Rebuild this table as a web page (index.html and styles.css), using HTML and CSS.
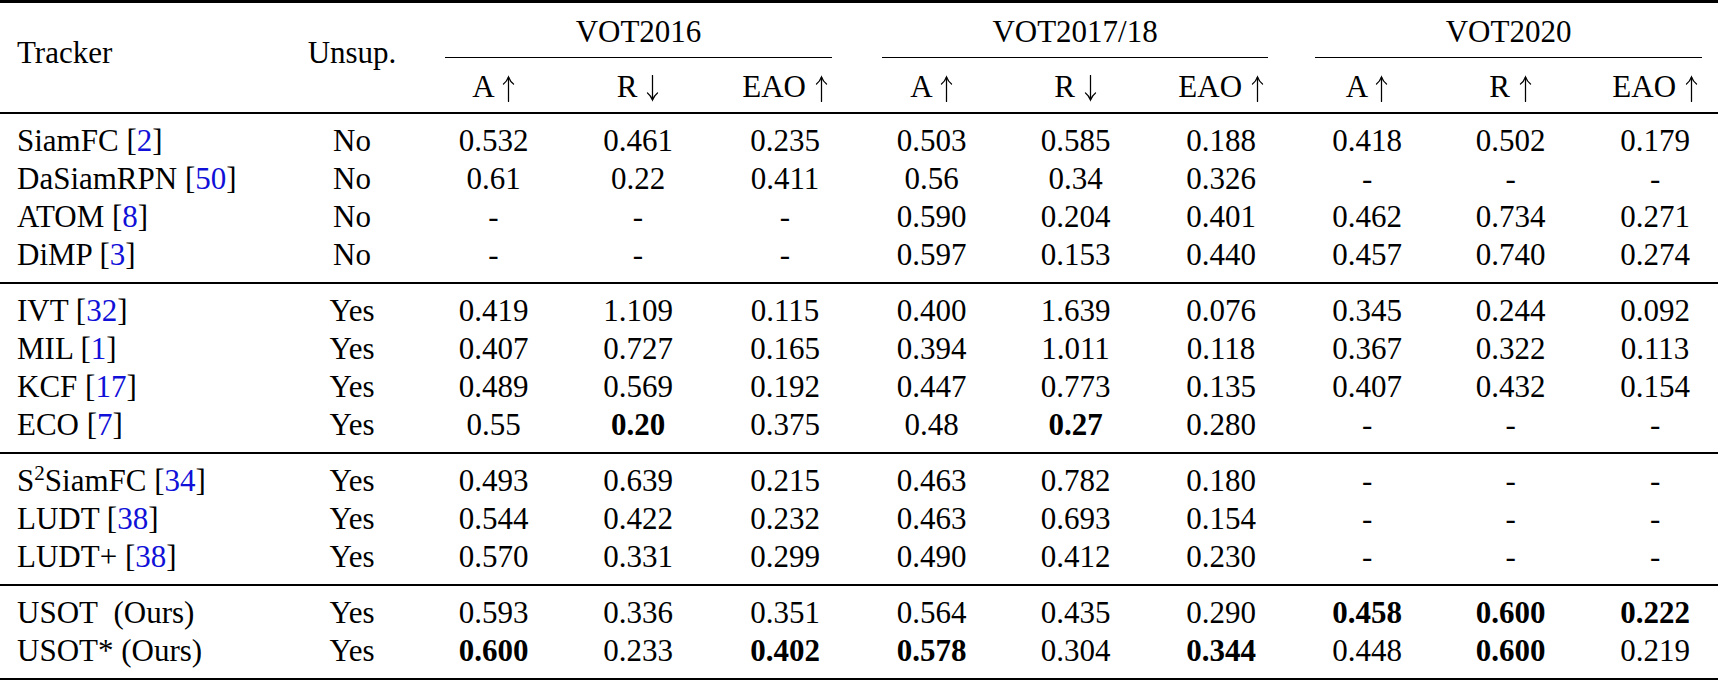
FILE: index.html
```html
<!DOCTYPE html>
<html lang="en">
<head>
<meta charset="utf-8">
<title>Tracker comparison</title>
<link rel="stylesheet" href="styles.css">
</head>
<body>
<table class="results">
  <colgroup>
    <col class="c-name"><col class="c-uns">
    <col class="c-a1"><col class="c-r1"><col class="c-e1">
    <col class="c-a2"><col class="c-r2"><col class="c-e2">
    <col class="c-a3"><col class="c-r3"><col class="c-e3">
  </colgroup>
  <thead>
    <tr class="hrow1">
      <th rowspan="2" class="name head-multi">Tracker</th>
      <th rowspan="2" class="head-multi">Unsup.</th>
      <th colspan="3" class="grp"><div class="grp-lbl">VOT2016</div></th>
      <th colspan="3" class="grp"><div class="grp-lbl">VOT2017/18</div></th>
      <th colspan="3" class="grp"><div class="grp-lbl last">VOT2020</div></th>
    </tr>
    <tr class="hrow2">
      <th>A <svg class="arr" viewBox="0 0 14 28" role="img" aria-label="↑"><path d="M7 2.2V28"/><path d="M1.6 9.2Q5.2 6.4 7 1.6Q8.8 6.4 12.4 9.2"/></svg></th>
      <th>R <svg class="arr dn" viewBox="0 0 14 28" role="img" aria-label="↓"><path d="M7 2.2V28"/><path d="M1.6 9.2Q5.2 6.4 7 1.6Q8.8 6.4 12.4 9.2"/></svg></th>
      <th>EAO <svg class="arr" viewBox="0 0 14 28" role="img" aria-label="↑"><path d="M7 2.2V28"/><path d="M1.6 9.2Q5.2 6.4 7 1.6Q8.8 6.4 12.4 9.2"/></svg></th>
      <th>A <svg class="arr" viewBox="0 0 14 28" role="img" aria-label="↑"><path d="M7 2.2V28"/><path d="M1.6 9.2Q5.2 6.4 7 1.6Q8.8 6.4 12.4 9.2"/></svg></th>
      <th>R <svg class="arr dn" viewBox="0 0 14 28" role="img" aria-label="↓"><path d="M7 2.2V28"/><path d="M1.6 9.2Q5.2 6.4 7 1.6Q8.8 6.4 12.4 9.2"/></svg></th>
      <th>EAO <svg class="arr" viewBox="0 0 14 28" role="img" aria-label="↑"><path d="M7 2.2V28"/><path d="M1.6 9.2Q5.2 6.4 7 1.6Q8.8 6.4 12.4 9.2"/></svg></th>
      <th>A <svg class="arr" viewBox="0 0 14 28" role="img" aria-label="↑"><path d="M7 2.2V28"/><path d="M1.6 9.2Q5.2 6.4 7 1.6Q8.8 6.4 12.4 9.2"/></svg></th>
      <th>R <svg class="arr" viewBox="0 0 14 28" role="img" aria-label="↑"><path d="M7 2.2V28"/><path d="M1.6 9.2Q5.2 6.4 7 1.6Q8.8 6.4 12.4 9.2"/></svg></th>
      <th class="lastcol">EAO <svg class="arr" viewBox="0 0 14 28" role="img" aria-label="↑"><path d="M7 2.2V28"/><path d="M1.6 9.2Q5.2 6.4 7 1.6Q8.8 6.4 12.4 9.2"/></svg></th>
    </tr>
  </thead>
  <tbody>
    <tr><td class="name">SiamFC [<span class="ref">2</span>]</td><td>No</td><td>0.532</td><td>0.461</td><td>0.235</td><td>0.503</td><td>0.585</td><td>0.188</td><td>0.418</td><td>0.502</td><td class="lastcol">0.179</td></tr>
    <tr><td class="name">DaSiamRPN [<span class="ref">50</span>]</td><td>No</td><td>0.61</td><td>0.22</td><td>0.411</td><td>0.56</td><td>0.34</td><td>0.326</td><td>-</td><td>-</td><td class="lastcol">-</td></tr>
    <tr><td class="name">ATOM [<span class="ref">8</span>]</td><td>No</td><td>-</td><td>-</td><td>-</td><td>0.590</td><td>0.204</td><td>0.401</td><td>0.462</td><td>0.734</td><td class="lastcol">0.271</td></tr>
    <tr><td class="name">DiMP [<span class="ref">3</span>]</td><td>No</td><td>-</td><td>-</td><td>-</td><td>0.597</td><td>0.153</td><td>0.440</td><td>0.457</td><td>0.740</td><td class="lastcol">0.274</td></tr>
  </tbody>
  <tbody>
    <tr><td class="name">IVT [<span class="ref">32</span>]</td><td>Yes</td><td>0.419</td><td>1.109</td><td>0.115</td><td>0.400</td><td>1.639</td><td>0.076</td><td>0.345</td><td>0.244</td><td class="lastcol">0.092</td></tr>
    <tr><td class="name">MIL [<span class="ref">1</span>]</td><td>Yes</td><td>0.407</td><td>0.727</td><td>0.165</td><td>0.394</td><td>1.011</td><td>0.118</td><td>0.367</td><td>0.322</td><td class="lastcol">0.113</td></tr>
    <tr><td class="name">KCF [<span class="ref">17</span>]</td><td>Yes</td><td>0.489</td><td>0.569</td><td>0.192</td><td>0.447</td><td>0.773</td><td>0.135</td><td>0.407</td><td>0.432</td><td class="lastcol">0.154</td></tr>
    <tr><td class="name">ECO [<span class="ref">7</span>]</td><td>Yes</td><td>0.55</td><td class="b">0.20</td><td>0.375</td><td>0.48</td><td class="b">0.27</td><td>0.280</td><td>-</td><td>-</td><td class="lastcol">-</td></tr>
  </tbody>
  <tbody>
    <tr><td class="name">S<sup>2</sup>SiamFC [<span class="ref">34</span>]</td><td>Yes</td><td>0.493</td><td>0.639</td><td>0.215</td><td>0.463</td><td>0.782</td><td>0.180</td><td>-</td><td>-</td><td class="lastcol">-</td></tr>
    <tr><td class="name">LUDT [<span class="ref">38</span>]</td><td>Yes</td><td>0.544</td><td>0.422</td><td>0.232</td><td>0.463</td><td>0.693</td><td>0.154</td><td>-</td><td>-</td><td class="lastcol">-</td></tr>
    <tr><td class="name">LUDT+ [<span class="ref">38</span>]</td><td>Yes</td><td>0.570</td><td>0.331</td><td>0.299</td><td>0.490</td><td>0.412</td><td>0.230</td><td>-</td><td>-</td><td class="lastcol">-</td></tr>
  </tbody>
  <tbody>
    <tr><td class="name">USOT&nbsp; (Ours)</td><td>Yes</td><td>0.593</td><td>0.336</td><td>0.351</td><td>0.564</td><td>0.435</td><td>0.290</td><td class="b">0.458</td><td class="b">0.600</td><td class="lastcol b">0.222</td></tr>
    <tr><td class="name">USOT* (Ours)</td><td>Yes</td><td class="b">0.600</td><td>0.233</td><td class="b">0.402</td><td class="b">0.578</td><td>0.304</td><td class="b">0.344</td><td>0.448</td><td class="b">0.600</td><td class="lastcol">0.219</td></tr>
  </tbody>
</table>
</body>
</html>
```

FILE: styles.css
```css
html, body {
  margin: 0;
  padding: 0;
  background: #ffffff;
}

body {
  font-family: "Liberation Serif", "Times New Roman", "DejaVu Serif", serif;
  font-size: 31px;
  color: #000000;
}

.results {
  width: 1718px;
  table-layout: fixed;
  border-collapse: collapse;
  border-spacing: 0;
  border-bottom: 3px solid #000;
}

.c-name { width: 282px; }
.c-uns  { width: 140px; }
.c-a1 { width: 143px; }
.c-r1 { width: 146px; }
.c-e1 { width: 148px; }
.c-a2 { width: 145px; }
.c-r2 { width: 143px; }
.c-e2 { width: 148px; }
.c-a3 { width: 144px; }
.c-r3 { width: 143px; }
.c-e3 { width: 136px; }

.results thead {
  border-top: 3px solid #000;
}

.results th,
.results td {
  padding: 0;
  font-weight: normal;
  text-align: center;
  white-space: nowrap;
  line-height: 38px;
}

.results th.name,
.results td.name {
  text-align: left;
  padding-left: 17px;
}

.head-multi {
  vertical-align: middle;
  padding-bottom: 10px !important;
}

.grp-lbl {
  margin: 0 27px 0 23px;
  padding: 10px 0 6px;
  border-bottom: 1px solid #000;
}

.grp-lbl.last {
  margin: 0 16px 0 20px;
}

.hrow2 th {
  padding: 10px 0 6px;
}

.results th.lastcol,
.results td.lastcol {
  padding-left: 10px;
}

.results tbody {
  border-top: 2px solid #000;
}

.results tbody tr:first-child td {
  padding-top: 8px;
}

.results tbody tr:last-child td {
  padding-bottom: 8px;
}

.arr {
  width: 13px;
  height: 27px;
  vertical-align: -5px;
  margin-left: 1px;
  fill: none;
  stroke: #000;
  stroke-width: 1.35;
  stroke-linecap: round;
}

.arr.dn {
  transform: scaleY(-1);
}

.ref {
  color: #1010d8;
}

.results td.b {
  font-weight: bold;
}

sup {
  font-size: 0.68em;
  line-height: 0;
  vertical-align: 0.5em;
}
```
